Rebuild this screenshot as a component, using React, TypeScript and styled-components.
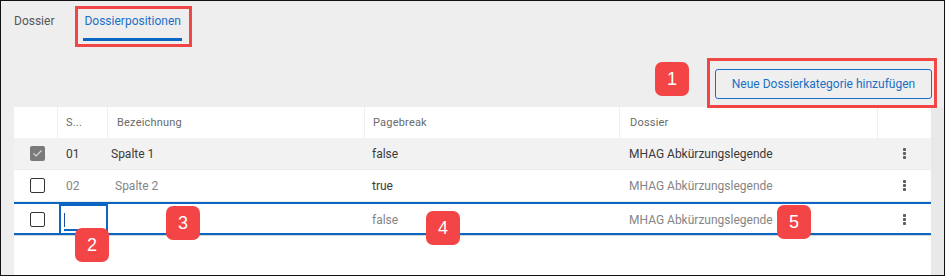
import React from 'react';
import styled, { createGlobalStyle } from 'styled-components';

const GlobalStyle = createGlobalStyle`
  html, body {
    margin: 0;
    padding: 0;
    background: #ffffff;
  }
  * {
    box-sizing: border-box;
  }
`;

const Frame = styled.div`
  width: 945px;
  height: 276px;
  border: 1px solid #111;
  background: #eeeeee;
  display: flex;
  flex-direction: column;
  font-family: Roboto, 'Liberation Sans', sans-serif;
  overflow: hidden;
`;

const TabBar = styled.div`
  height: 46px;
  display: flex;
  align-items: flex-start;
  padding-left: 12px;
  gap: 28px;
`;

const Tab = styled.div<{ $active?: boolean }>`
  position: relative;
  padding-top: 13px;
  height: 40px;
  font-size: 12px;
  color: ${(p) => (p.$active ? '#1b6fc8' : '#555')};
  border-bottom: 3px solid ${(p) => (p.$active ? '#0a66c2' : 'transparent')};
  padding-left: 1px;
  padding-right: 1px;

  ${(p) =>
    p.$active &&
    `
    &::after {
      content: '';
      position: absolute;
      left: -8px;
      right: -10px;
      top: 5px;
      bottom: -9px;
      border: 3px solid #f04646;
    }
  `}
`;

const Toolbar = styled.div`
  display: flex;
  justify-content: flex-end;
  align-items: flex-start;
  gap: 26px;
  padding-right: 12px;
  height: 60px;
`;

const Badge = styled.div`
  width: 34px;
  height: 34px;
  border-radius: 7px;
  background: #f34545;
  color: #fff;
  font-family: 'Liberation Sans', Arial, sans-serif;
  font-size: 18px;
  display: flex;
  align-items: center;
  justify-content: center;
  z-index: 3;
`;

const ToolbarBadge = styled(Badge)`
  margin-top: 15px;
`;

const FloatingBadge = styled(Badge)<{ $x: number; $y: number }>`
  position: absolute;
  left: ${(p) => p.$x}px;
  top: ${(p) => p.$y}px;
`;

const AddButton = styled.button`
  position: relative;
  margin-top: 22px;
  width: 217px;
  height: 30px;
  border: 1px solid #1a6fc6;
  border-radius: 3px;
  background: #efefef;
  color: #1a6fc6;
  font-family: Roboto, 'Liberation Sans', sans-serif;
  font-size: 12px;
  padding: 0;

  &::after {
    content: '';
    position: absolute;
    left: -9px;
    right: -6px;
    top: -12px;
    bottom: -10px;
    border: 3px solid #f04646;
    z-index: 2;
  }
`;

const Body = styled.div`
  flex: 1;
  display: flex;
  padding-left: 13px;
`;

const Panel = styled.div`
  position: relative;
  flex: 1;
  background: #ffffff;
`;

const ScrollTrack = styled.div`
  width: 13px;
  background: #e9e9e9;
`;

const COLS = '44px 50px 257px 255px 258px 52px';

const Row = styled.div<{ $selected?: boolean; $editing?: boolean }>`
  display: grid;
  grid-template-columns: ${COLS};
  height: ${(p) => (p.$editing ? '33px' : '32px')};
  align-items: center;
  background: ${(p) => (p.$selected ? '#f2f2f2' : '#ffffff')};
  border-bottom: 1px solid #ececec;
  ${(p) =>
    p.$editing &&
    `
    border-top: 2px solid #0a66c2;
    border-bottom: 2px solid #0a66c2;
    box-shadow: 0 1px 0 #d6d6d6;
  `}
`;

const HeaderRow = styled.div`
  display: grid;
  grid-template-columns: ${COLS};
  height: 31px;
`;

const HeaderCell = styled.div<{ $pad?: number }>`
  display: flex;
  align-items: center;
  padding-left: ${(p) => p.$pad ?? 8}px;
  font-size: 11px;
  color: #6a6a6a;
  letter-spacing: 0.2px;
  border-right: 1px solid #efefef;

  &:last-child {
    border-right: none;
  }
`;

const Cell = styled.div<{ $pad?: number; $tone?: 'dark' | 'light' }>`
  padding-left: ${(p) => p.$pad ?? 8}px;
  font-size: 12px;
  color: ${(p) => (p.$tone === 'light' ? '#858585' : '#3a3a3a')};
  white-space: nowrap;
`;

const CheckCell = styled.div`
  display: flex;
  justify-content: center;
  padding-left: 2px;
`;

const Checkbox = styled.div<{ $checked?: boolean }>`
  width: 15px;
  height: 15px;
  border-radius: 2px;
  border: ${(p) => (p.$checked ? 'none' : '1.5px solid #333')};
  background: ${(p) => (p.$checked ? '#7a7a7a' : '#fff')};
  display: flex;
  align-items: center;
  justify-content: center;
`;

const EditCell = styled.div`
  height: 31px;
  margin-left: 1px;
  margin-right: 0;
  border: 2px solid #0a66c2;
  padding: 4px 5px 0 3px;
`;

const EditInput = styled.div`
  height: 21px;
  border-bottom: 2px solid #0a66c2;
  margin-right: 2px;
  display: flex;
  align-items: center;
`;

const Caret = styled.div`
  width: 1px;
  height: 14px;
  background: #1a4e9c;
`;

const KebabCell = styled.div`
  display: flex;
  justify-content: center;
  padding-left: 1px;
`;

const Kebab = () => (
  <svg width="3" height="11" viewBox="0 0 3 11">
    <rect x="0" y="0" width="3" height="3" rx="0.8" fill="#5f5f5f" />
    <rect x="0" y="4" width="3" height="3" rx="0.8" fill="#5f5f5f" />
    <rect x="0" y="8" width="3" height="3" rx="0.8" fill="#5f5f5f" />
  </svg>
);

const Check = () => (
  <svg width="11" height="9" viewBox="0 0 11 9">
    <path d="M1.5 4.5 L4.2 7 L9.5 1.5" fill="none" stroke="#d8d8d8" strokeWidth="1.2" />
  </svg>
);

const rows = [
  { nr: '01', name: 'Spalte 1', pb: 'false', dossier: 'MHAG Abkürzungslegende', checked: true, light: false },
  { nr: '02', name: 'Spalte 2', pb: 'true', dossier: 'MHAG Abkürzungslegende', checked: false, light: true },
];

const App: React.FC = () => {
  return (
    <>
      <GlobalStyle />
      <Frame>
        <TabBar>
          <Tab>Dossier</Tab>
          <Tab $active>Dossierpositionen</Tab>
        </TabBar>
        <Toolbar>
          <ToolbarBadge>1</ToolbarBadge>
          <AddButton>Neue Dossierkategorie hinzufügen</AddButton>
        </Toolbar>
        <Body>
          <Panel>
            <HeaderRow>
              <HeaderCell />
              <HeaderCell>S...</HeaderCell>
              <HeaderCell $pad={9}>Bezeichnung</HeaderCell>
              <HeaderCell>Pagebreak</HeaderCell>
              <HeaderCell $pad={10}>Dossier</HeaderCell>
              <HeaderCell />
            </HeaderRow>
            {rows.map((r) => (
              <Row key={r.nr} $selected={r.checked}>
                <CheckCell>
                  <Checkbox $checked={r.checked}>{r.checked && <Check />}</Checkbox>
                </CheckCell>
                <Cell $tone={r.light ? 'light' : 'dark'}>{r.nr}</Cell>
                <Cell $pad={r.light ? 7 : 3} $tone={r.light ? 'light' : 'dark'}>{r.name}</Cell>
                <Cell $pad={7}>{r.pb}</Cell>
                <Cell $pad={9} $tone={r.light ? 'light' : 'dark'}>{r.dossier}</Cell>
                <KebabCell>
                  <Kebab />
                </KebabCell>
              </Row>
            ))}
            <Row $editing>
              <CheckCell>
                <Checkbox />
              </CheckCell>
              <EditCell>
                <EditInput>
                  <Caret />
                </EditInput>
              </EditCell>
              <Cell />
              <Cell $pad={7} $tone="light">false</Cell>
              <Cell $pad={9} $tone="light">MHAG Abkürzungslegende</Cell>
              <KebabCell>
                <Kebab />
              </KebabCell>
            </Row>
            <FloatingBadge $x={61} $y={121}>2</FloatingBadge>
            <FloatingBadge $x={152} $y={99}>3</FloatingBadge>
            <FloatingBadge $x={412} $y={104}>4</FloatingBadge>
            <FloatingBadge $x={763} $y={98}>5</FloatingBadge>
          </Panel>
          <ScrollTrack />
        </Body>
      </Frame>
    </>
  );
};

export default App;
